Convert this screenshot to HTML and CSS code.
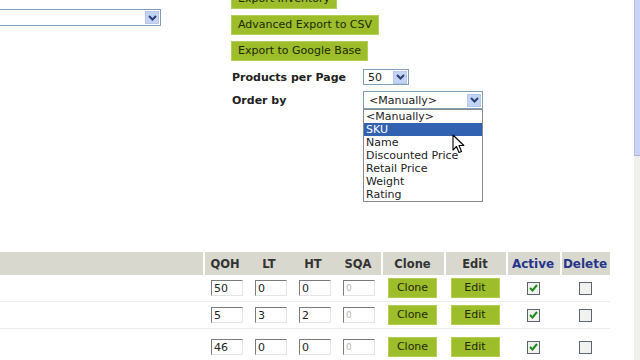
FILE: index.html
```html
<!DOCTYPE html>
<html lang="en">
<head>
  <meta charset="UTF-8">
  <title>Inventory</title>
  <link rel="stylesheet" href="styles.css">
</head>
<body>
  <div class="screen">
    <div class="page">
      <div class="top">
        <div class="filter">
          <div class="select wide">
            <span class="value"></span>
            <span class="arrow"><svg width="9" height="6" viewBox="0 0 9 6"><path d="M1 1 L4.5 4.5 L8 1" fill="none" stroke="#2a3f7a" stroke-width="2"/></svg></span>
          </div>
        </div>
        <div class="tools">
          <button class="btn">Export Inventory</button>
          <button class="btn">Advanced Export to CSV</button>
          <button class="btn">Export to Google Base</button>
          <div class="field">
            <label>Products per Page</label>
            <div class="select small">
              <span class="value">50</span>
              <span class="arrow"><svg width="9" height="6" viewBox="0 0 9 6"><path d="M1 1 L4.5 4.5 L8 1" fill="none" stroke="#2a3f7a" stroke-width="2"/></svg></span>
            </div>
          </div>
          <div class="field">
            <label>Order by</label>
            <div class="select order">
              <span class="value">&lt;Manually&gt;</span>
              <span class="arrow"><svg width="9" height="6" viewBox="0 0 9 6"><path d="M1 1 L4.5 4.5 L8 1" fill="none" stroke="#2a3f7a" stroke-width="2"/></svg></span>
              <ul class="options">
                <li>&lt;Manually&gt;</li>
                <li class="picked">SKU</li>
                <li>Name</li>
                <li>Discounted Price</li>
                <li>Retail Price</li>
                <li>Weight</li>
                <li>Rating</li>
              </ul>
              <svg class="cursor" width="13" height="20" viewBox="0 0 13 20">
                <path d="M1 1 L1 16 L4.5 12.5 L7 18.5 L9.5 17.5 L7 11.5 L11.8 11.5 Z" fill="#fff" stroke="#000" stroke-width="1.1" stroke-linejoin="round"/>
              </svg>
            </div>
          </div>
        </div>
      </div>

      <table class="grid">
        <thead>
          <tr>
            <th class="name"></th>
            <th class="sep">QOH</th>
            <th>LT</th>
            <th>HT</th>
            <th>SQA</th>
            <th class="sep">Clone</th>
            <th class="sep">Edit</th>
            <th class="sep link">Active</th>
            <th class="sep link">Delete</th>
          </tr>
        </thead>
        <tbody>
          <tr>
            <td></td>
            <td class="num"><input class="qty" value="50"></td>
            <td class="num"><input class="qty" value="0"></td>
            <td class="num"><input class="qty" value="0"></td>
            <td class="num"><input class="qty off" value="0" disabled></td>
            <td><button class="btn mini">Clone</button></td>
            <td><button class="btn mini">Edit</button></td>
            <td><span class="check on"><svg width="9" height="8" viewBox="0 0 9 8"><path d="M1 4 L3.5 6.5 L8 1" fill="none" stroke="#1f8a1f" stroke-width="2"/></svg></span></td>
            <td><span class="check"></span></td>
          </tr>
          <tr>
            <td></td>
            <td class="num"><input class="qty" value="5"></td>
            <td class="num"><input class="qty" value="3"></td>
            <td class="num"><input class="qty" value="2"></td>
            <td class="num"><input class="qty off" value="0" disabled></td>
            <td><button class="btn mini">Clone</button></td>
            <td><button class="btn mini">Edit</button></td>
            <td><span class="check on"><svg width="9" height="8" viewBox="0 0 9 8"><path d="M1 4 L3.5 6.5 L8 1" fill="none" stroke="#1f8a1f" stroke-width="2"/></svg></span></td>
            <td><span class="check"></span></td>
          </tr>
          <tr class="tall">
            <td></td>
            <td class="num"><input class="qty" value="46"></td>
            <td class="num"><input class="qty" value="0"></td>
            <td class="num"><input class="qty" value="0"></td>
            <td class="num"><input class="qty off" value="0" disabled></td>
            <td><button class="btn mini">Clone</button></td>
            <td><button class="btn mini">Edit</button></td>
            <td><span class="check on"><svg width="9" height="8" viewBox="0 0 9 8"><path d="M1 4 L3.5 6.5 L8 1" fill="none" stroke="#1f8a1f" stroke-width="2"/></svg></span></td>
            <td><span class="check"></span></td>
          </tr>
        </tbody>
      </table>
    </div>
    <div class="scrollbar">
      <div class="thumb"></div>
    </div>
  </div>
</body>
</html>
```

FILE: styles.css
```css
body {
  margin: 0;
  font-family: "DejaVu Sans", Verdana, sans-serif;
  font-size: 11px;
  color: #222;
  background-color: #fff;
  overflow: hidden;
}

.screen {
  display: flex;
  width: 640px;
  height: 360px;
  overflow: hidden;
}

.page {
  width: 634px;
  flex: none;
}

.top {
  display: grid;
  grid-template-columns: 231px 1fr;
  align-items: start;
}

.filter {
  padding-top: 9px;
  margin-left: -6px;
}

.tools {
  margin-top: -11px;
  display: flex;
  flex-direction: column;
  align-items: flex-start;
}

.btn {
  font-family: "DejaVu Sans", Verdana, sans-serif;
  font-size: 11px;
  color: #1d2a05;
  background-color: #9dbd2b;
  border: 1px solid #b3cf55;
  height: 20px;
  padding: 0 6px;
  margin: 0 0 6px 0;
  line-height: 18px;
  cursor: pointer;
}

.field {
  display: flex;
  align-items: center;
  margin-top: 2px;
  margin-bottom: 4px;
}

.field label {
  width: 132px;
  padding-left: 1px;
  box-sizing: border-box;
  font-weight: bold;
  color: #222;
}

.select {
  position: relative;
  display: flex;
  align-items: center;
  justify-content: space-between;
  box-sizing: border-box;
  border: 1px solid #7f9db9;
  background-color: #fff;
  padding: 0 1px 0 4px;
}

.select.wide {
  width: 167px;
  height: 17px;
}

.select.small {
  width: 46px;
  height: 16px;
}

.select.order {
  width: 120px;
  height: 18px;
  padding-left: 5px;
}

.arrow {
  display: flex;
  align-items: center;
  justify-content: center;
  width: 14px;
  height: 13px;
  background-color: #c3d3f3;
  border: 1px solid #b6c7ea;
  box-sizing: border-box;
}

.options {
  position: absolute;
  left: -1px;
  top: 17px;
  width: 120px;
  box-sizing: border-box;
  margin: 0;
  padding: 0;
  list-style: none;
  background-color: #fff;
  border: 1px solid #8a8a8a;
  z-index: 2;
}

.options li {
  height: 13px;
  line-height: 13px;
  padding-left: 2px;
  color: #222;
}

.options li.picked {
  background-color: #3161b1;
  color: #fff;
}

.cursor {
  position: absolute;
  left: 88px;
  top: 42px;
  z-index: 3;
}

.grid {
  margin-top: 139px;
  border-collapse: collapse;
  table-layout: fixed;
  width: 610px;
}

.grid th {
  background-color: #d8d8cf;
  height: 23px;
  padding: 0;
  font-weight: bold;
  font-size: 11.5px;
  color: #333;
  text-align: center;
}

.grid th.name {
  width: 203px;
}

.grid th:nth-child(2) { width: 44px; }
.grid th:nth-child(3) { width: 44px; }
.grid th:nth-child(4) { width: 44px; }
.grid th:nth-child(5) { width: 46px; }
.grid th:nth-child(6) { width: 63px; }
.grid th:nth-child(7) { width: 62px; }
.grid th:nth-child(8) { width: 54px; }
.grid th:nth-child(9) { width: 50px; }

.grid th.sep {
  box-shadow: inset 2px 0 0 #fff;
}

.grid th.link {
  color: #26358a;
  font-size: 12px;
}

.grid td {
  height: 26px;
  padding: 0;
  text-align: center;
  border-bottom: 1px solid #ececea;
}

.grid tr.tall td {
  height: 36px;
  border-bottom: none;
}

.grid td.num {
  text-align: left;
  padding-left: 8px;
}

.qty {
  width: 32px;
  height: 16px;
  box-sizing: border-box;
  font-family: "DejaVu Sans", Verdana, sans-serif;
  font-size: 11px;
  padding: 0 0 0 2px;
  color: #222;
  border: 1px solid;
  border-color: #7a7a7a #e4e4e4 #e4e4e4 #7a7a7a;
  background-color: #fff;
}

.qty.off {
  color: #b8b8b8;
  font-size: 9px;
}

.btn.mini {
  height: 20px;
  margin: 0;
  padding: 0;
  width: 49px;
}

.check {
  display: inline-flex;
  align-items: center;
  justify-content: center;
  width: 13px;
  height: 13px;
  box-sizing: border-box;
  border: 1px solid #5b6470;
  background-color: #f1f1ee;
  vertical-align: middle;
}

.scrollbar {
  width: 6px;
  flex: none;
  background-color: #efefeb;
}

.thumb {
  height: 155px;
  background-color: #c9d3f5;
  border-left: 1px solid #b4c0ea;
  border-bottom: 1px solid #a9b4dc;
}
```
